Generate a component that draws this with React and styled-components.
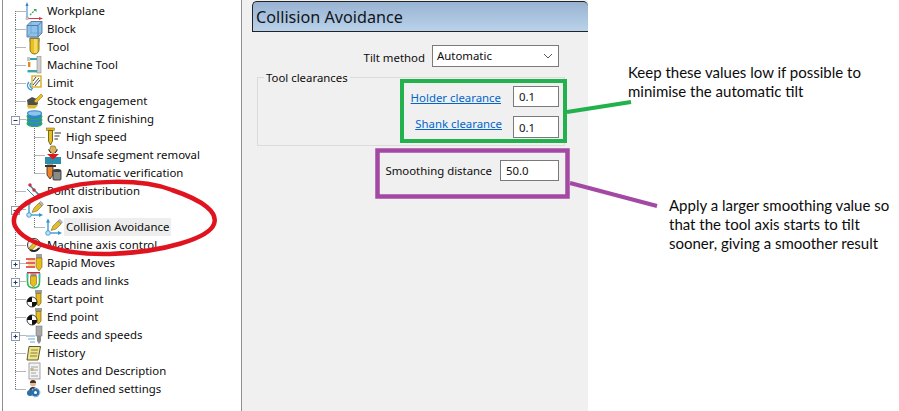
import React from "react";
import styled, { createGlobalStyle } from "styled-components";

const Global = createGlobalStyle`
  html, body { margin: 0; padding: 0; background: #fff; }
  #root { width: 899px; height: 411px; overflow: hidden; }
`;

const UI_FONT = `"Noto Sans", "Open Sans", "Liberation Sans", sans-serif`;

const Page = styled.div`
  position: relative;
  display: flex;
  width: 899px;
  height: 411px;
  background: #fff;
  overflow: hidden;
  font-family: ${UI_FONT};
  font-size: 11.4px;
  color: #0c0c0c;
`;

const TreePanel = styled.div`
  box-sizing: border-box;
  width: 239px;
  height: 411px;
  margin-left: 2px;
  border-left: 1px solid #8f8f8f;
  padding-top: 2px;
  display: flex;
  flex-direction: column;
  overflow: hidden;
`;

const Row = styled.div`
  display: flex;
  align-items: center;
  height: 18px;
  flex: none;
`;

const RowIcon = styled.svg`
  width: 19px;
  height: 18px;
  flex: none;
  overflow: visible;
`;

const Connector = styled.svg`
  width: ${(p) => (p.$level === 2 ? 42 : 23)}px;
  height: 18px;
  flex: none;
`;

const RowLabel = styled.span`
  padding: 0 2px;
  height: 18px;
  line-height: 17px;
  white-space: nowrap;
  background: ${(p) => (p.$selected ? "#eeeeee" : "transparent")};
`;

const Panel = styled.div`
  box-sizing: border-box;
  width: 347px;
  height: 411px;
  border-left: 1px solid #8f8f8f;
  background: #f0f0f0;
  padding: 1px 0 0 10px;
  display: flex;
  flex-direction: column;
`;

const TitleBar = styled.div`
  box-sizing: border-box;
  height: 31px;
  border: 1px solid #222;
  border-right: 0;
  border-radius: 5px 5px 0 0;
  background: linear-gradient(#98b3d2, #bad2ea);
  padding-left: 3px;
  font-size: 16.2px;
  line-height: 31px;
  color: #10151c;
  white-space: nowrap;
`;

const FormRow = styled.div`
  display: flex;
  justify-content: flex-end;
  align-items: center;
  gap: ${(p) => p.$gap || 8}px;
  padding-right: 29px;
  margin-top: ${(p) => p.$top || 0}px;
`;

const FieldLabel = styled.span`
  white-space: nowrap;
  transform: translateY(${(p) => p.$shift || 0}px);
`;

const LinkLabel = styled.a`
  color: #0066cc;
  text-decoration: underline;
  white-space: nowrap;
  cursor: pointer;
  transform: translateY(${(p) => p.$shift || 0}px);
`;

const SelectBox = styled.div`
  box-sizing: border-box;
  width: 127px;
  height: 22px;
  border: 1px solid #7a7a7a;
  background: #fff;
  padding: 0 4px;
  display: flex;
  align-items: center;
  justify-content: space-between;
  line-height: 18px;
`;

const ValueInput = styled.input`
  box-sizing: border-box;
  width: ${(p) => p.$w || 46}px;
  height: ${(p) => p.$h || 21}px;
  border: 1px solid #7a7a7a;
  border-radius: 0;
  background: #fff;
  padding: 0 0 0 5px;
  margin: 0;
  font: inherit;
  color: #111;
  outline: none;
`;

const Clearances = styled.fieldset`
  box-sizing: border-box;
  height: 76px;
  margin: 3px 23px 0 5px;
  padding: 0 5px 0 0;
  border: 1px solid #dcdcdc;
  min-width: 0;
  display: flex;
  flex-direction: column;
  gap: 9px;
`;

const Legend = styled.legend`
  margin-left: 6px;
  padding: 0 2px;
  height: 15px;
  line-height: 15px;
`;

const ClearanceRow = styled.div`
  display: flex;
  justify-content: flex-end;
  align-items: center;
  gap: ${(p) => p.$gap}px;
  padding-top: ${(p) => p.$pad || 0}px;
`;

const Markup = styled.svg`
  position: absolute;
  left: 0;
  top: 0;
  pointer-events: none;
`;

const Note = styled.div`
  position: absolute;
  left: ${(p) => p.$x}px;
  top: ${(p) => p.$y}px;
  font-family: Lato, "Noto Sans", sans-serif;
  font-size: 15px;
  line-height: 19px;
  color: #0c0c0c;
  white-space: nowrap;
`;

const AxesIcon = () => (
  <g>
    <path d="M3 15V3" stroke="#2f93cc" strokeWidth="1.3" />
    <path d="M1 4.5L3 .5l2 4z" fill="#2f93cc" />
    <path d="M3 15H14" stroke="#2f93cc" strokeWidth="1.3" />
    <path d="M13 13l4 2-4 2z" fill="#2f93cc" />
    <circle cx="3" cy="15" r="2.3" fill="#bfe0f2" stroke="#2f93cc" strokeWidth=".8" />
    <path d="M6 12.5L8 8l5-5 3 3-5 5z" fill="#e4bd2d" stroke="#7d6a20" strokeWidth=".6" />
    <path d="M13 3l1.7-1.7 2.8 2.8L16 6z" fill="#b9b9b9" stroke="#777" strokeWidth=".5" />
  </g>
);

const Ball = () => (
  <g>
    <circle cx="6" cy="12" r="5" fill="#fff" stroke="#111" strokeWidth=".8" />
    <path d="M6 7a5 5 0 0 0-5 5h5zM6 12v5a5 5 0 0 0 5-5z" fill="#111" />
  </g>
);

const icons = {
  workplane: (
    <g fill="none">
      <path d="M1 16V2" stroke="#2f7fd0" strokeWidth="1" />
      <path d="M-.5 4L1 0l1.5 4z" fill="#2f7fd0" />
      <path d="M1 16.5H14" stroke="#e2333a" strokeWidth="1" />
      <path d="M13 15l4 1.5-4 1.5z" fill="#e2333a" />
      <path d="M4 13l5-5" stroke="#2fa84f" strokeWidth="1.2" strokeDasharray="2 1" />
      <path d="M7.5 7H10.5V10z" fill="#2fa84f" />
      <rect x="0" y="15" width="2.5" height="2.5" fill="#ccc" stroke="#888" strokeWidth=".4" />
    </g>
  ),
  block: (
    <g stroke="#3d6c92" strokeWidth=".8">
      <path d="M1 5.5L5 1.5H16V13L12 17H1z" fill="#8ec1ec" />
      <path d="M1 5.5H12V17M12 5.5L16 1.5" fill="none" />
      <path d="M5 1.5V13H16M5 13L1 17" fill="none" stroke="#6a97bc" strokeWidth=".6" />
    </g>
  ),
  tool: (
    <g>
      <rect x="3.5" y="0" width="10" height="4" fill="#a8a8a8" />
      <path d="M4 0h9v11.5a4.5 4.5 0 0 1-9 0z" fill="#e8c11f" stroke="#6a5a10" strokeWidth=".8" />
      <path d="M8 1h3v14H8z" fill="#f3d968" />
      <path d="M4.5 .5h8" stroke="#777" strokeWidth="1" />
    </g>
  ),
  machine: (
    <g>
      <rect x="11" y="0.5" width="4" height="16.5" fill="#cfcfcf" stroke="#8d8d8d" strokeWidth=".6" />
      <rect x="1.5" y="2" width="9.5" height="2" fill="#3aa5a8" />
      <rect x="1.5" y="14" width="9.5" height="2.4" fill="#3aa5a8" />
      <rect x="1" y="1" width="3" height="4" fill="#c7c7c7" />
      <rect x="2" y="6" width="2.4" height="5" fill="#e48a1f" />
    </g>
  ),
  limit: (
    <g fill="none">
      <rect x="6" y="2" width="9" height="11" fill="#fff" stroke="#d8ae1e" strokeWidth="1.4" />
      <path d="M7 11L13 4M9 12l5-6M7 7l3-4" stroke="#444" strokeWidth="1" />
      <path d="M3 8c-3 3-1 8 3 8M5 9c-2 2-1 5 2 6" stroke="#3d9ad1" strokeWidth="1.3" />
    </g>
  ),
  stock: (
    <g>
      <path d="M1 8l5-3 5 2 1 5-4 3H2z" fill="#4e4e4e" />
      <path d="M1 13h11l-3 3.5H2z" fill="#d9b82a" />
      <path d="M8 9l7-7 2 2-7 7z" fill="#e8c11f" stroke="#79651a" strokeWidth=".5" />
    </g>
  ),
  constz: (
    <g stroke="#2caa55" strokeWidth="1.1">
      <ellipse cx="8.5" cy="13.5" rx="7.5" ry="3" fill="#2f86cf" />
      <ellipse cx="8.5" cy="10" rx="7.5" ry="3" fill="#2f86cf" />
      <ellipse cx="8.5" cy="6.5" rx="7.5" ry="3" fill="#2f86cf" />
      <ellipse cx="8.5" cy="3.5" rx="7" ry="2.7" fill="#8cc4ea" stroke="#2f86cf" />
    </g>
  ),
  high: (
    <g>
      <rect x="1.5" y="0" width="8" height="2.4" fill="#e7c01e" stroke="#6a5a10" strokeWidth=".5" />
      <path d="M3.5 2.4h4V13L5.5 17 3.5 13z" fill="#e7c01e" stroke="#5a4a08" strokeWidth=".8" />
      <path d="M9.5 5H16M9.5 8H14.5M9.5 11H13" stroke="#333" strokeWidth="1.2" />
    </g>
  ),
  unsafe: (
    <g>
      <rect x="0" y="11" width="16" height="7" fill="#2c8eaa" />
      <path d="M6 0h4l2 5-4 3-4-3z" fill="#d7b35c" stroke="#6d5a24" strokeWidth=".6" />
      <path d="M2 8h12l-6 5.5z" fill="#e3151d" />
      <path d="M3.5 3.5L6 7M12.5 3.5L10 7" stroke="#222" strokeWidth="1" />
    </g>
  ),
  verify: (
    <g>
      <path d="M2 1h6v10l-3 4-3-4z" fill="#e9852b" stroke="#322" strokeWidth=".8" />
      <path d="M0 1h11v2H0z" fill="#333" />
      <rect x="8" y="6" width="8" height="10" rx="1" fill="#8a8a8a" stroke="#222" strokeWidth=".8" />
      <ellipse cx="12" cy="6.5" rx="4" ry="1.6" fill="#3e3e3e" />
    </g>
  ),
  points: (
    <g>
      <path d="M3 2.5L12 12" stroke="#2f8ea0" strokeWidth="1.6" />
      <circle cx="4" cy="3" r="1.7" fill="#d2303b" />
      <circle cx="8" cy="8" r="1.7" fill="#d2303b" />
      <circle cx="13" cy="13" r="1.7" fill="#d2303b" />
      <path d="M1 7L8 14" stroke="#2f8ea0" strokeWidth="1" />
    </g>
  ),
  axis: <AxesIcon />,
  machineAxis: (
    <g>
      <circle cx="8" cy="9" r="6.5" fill="#f4f1dc" stroke="#333" strokeWidth="1" />
      <path d="M3 12L10 4l3 2-7 8z" fill="#e6bd1e" stroke="#555" strokeWidth=".5" />
      <path d="M4 14a7 7 0 0 0 9-2" fill="none" stroke="#222" strokeWidth="1.6" />
    </g>
  ),
  rapid: (
    <g>
      <path d="M0 5H9M0 9H9M0 13H9" stroke="#e22a2a" strokeWidth="1.6" />
      <path d="M2 7H9M2 11H9" stroke="#e8c11f" strokeWidth="1.2" />
      <rect x="10" y="0" width="6" height="4" fill="#a0a0a0" />
      <path d="M10 4h6v9l-3 4-3-4z" fill="#e6bd1e" stroke="#7a6215" strokeWidth=".6" />
    </g>
  ),
  leads: (
    <g>
      <path d="M1 0.7H14" stroke="#e2202a" strokeWidth="1.4" />
      <path d="M1.5 1v9c0 5 3 6 6 6s6-1 6-6V1" fill="none" stroke="#34b456" strokeWidth="1.6" />
      <path d="M1.5 1v5M13.5 1v5" stroke="#35b4d4" strokeWidth="1.4" />
      <rect x="4.5" y="1" width="6" height="3" fill="#999" />
      <path d="M4.5 4h6v8l-3 3-3-3z" fill="#e6bd1e" stroke="#7a6215" strokeWidth=".6" />
    </g>
  ),
  start: (
    <g>
      <rect x="9" y="0" width="7" height="3.4" fill="#9c9c9c" />
      <path d="M10 3.4h5V13l-2.5 3L10 13z" fill="#e6bd1e" stroke="#6f5a12" strokeWidth=".7" />
      <Ball />
    </g>
  ),
  feeds: (
    <g>
      <rect x="10" y="0" width="6" height="10" fill="#a9a9a9" stroke="#6b6b6b" strokeWidth=".5" />
      <path d="M11 10h4v5l-2 3-2-3z" fill="#8b8b8b" />
      <path d="M0 10H9M2 13H9M4 16H9" stroke="#69a4d4" strokeWidth="1" />
    </g>
  ),
  history: (
    <g>
      <path d="M3 2.5h11.5L12 16H1z" fill="#f0e58a" stroke="#4f4a22" strokeWidth=".9" />
      <path d="M5 6h7M4.5 9h7M4 12h7" stroke="#6c6530" strokeWidth=".8" />
    </g>
  ),
  notes: (
    <g>
      <rect x="3" y="1" width="11" height="16" fill="#f3f3f3" stroke="#8e8e8e" strokeWidth=".8" />
      <path d="M5 5H12M5 8H12M5 11H10M5 14H12" stroke="#a2a29a" strokeWidth="1" />
      <rect x="4.5" y="6" width="3" height="3" fill="#bdb58f" />
    </g>
  ),
  user: (
    <g>
      <circle cx="7" cy="3.5" r="3" fill="#e5b898" />
      <path d="M4 3a3 3 0 0 1 6 0z" fill="#4a3120" />
      <path d="M3 13c0-4 1-6 4-6s4 2 5 4z" fill="#353a44" />
      <circle cx="9.5" cy="12.5" r="4.2" fill="#2d6ea8" stroke="#8ab2d2" strokeWidth="1.3" strokeDasharray="2 1" />
      <circle cx="9.5" cy="12.5" r="1.5" fill="#fff" />
      <circle cx="4" cy="13" r="3" fill="#2d6ea8" />
    </g>
  ),
};

const items = [
  { label: "Workplane", icon: "workplane", first: true },
  { label: "Block", icon: "block" },
  { label: "Tool", icon: "tool" },
  { label: "Machine Tool", icon: "machine" },
  { label: "Limit", icon: "limit" },
  { label: "Stock engagement", icon: "stock" },
  { label: "Constant Z finishing", icon: "constz", box: "minus", parent: true },
  { label: "High speed", icon: "high", level: 2 },
  { label: "Unsafe segment removal", icon: "unsafe", level: 2 },
  { label: "Automatic verification", icon: "verify", level: 2, lastChild: true },
  { label: "Point distribution", icon: "points" },
  { label: "Tool axis", icon: "axis", box: "minus", parent: true },
  { label: "Collision Avoidance", icon: "axis", level: 2, lastChild: true, selected: true },
  { label: "Machine axis control", icon: "machineAxis" },
  { label: "Rapid Moves", icon: "rapid", box: "plus" },
  { label: "Leads and links", icon: "leads", box: "plus" },
  { label: "Start point", icon: "start" },
  { label: "End point", icon: "start" },
  { label: "Feeds and speeds", icon: "feeds", box: "plus" },
  { label: "History", icon: "history" },
  { label: "Notes and Description", icon: "notes" },
  { label: "User defined settings", icon: "user", last: true },
];

const Dots = ({ d }) => <path d={d} stroke="#6e6e6e" strokeWidth="1" strokeDasharray="1 1" fill="none" />;

const Lines = ({ item }) => {
  const level = item.level || 1;
  const trunkTop = item.first ? 9 : 0;
  const trunkBottom = item.last ? 9 : 18;
  return (
    <Connector $level={level} viewBox={`0 0 ${level === 2 ? 42 : 23} 18`}>
      <Dots d={`M12.5 ${trunkTop}V${trunkBottom}`} />
      {level === 1 && <Dots d="M12.5 9.5H23" />}
      {item.parent && <Dots d="M31.5 14V18" />}
      {level === 2 && (
        <>
          <Dots d={`M31.5 0V${item.lastChild ? 9.5 : 18}`} />
          <Dots d="M31.5 9.5H42" />
        </>
      )}
      {item.box && (
        <g>
          <rect x="8.5" y="6.5" width="8" height="8" fill="#fff" stroke="#8d99a6" />
          <path d="M10.5 10.5h4" stroke="#1f3a6a" />
          {item.box === "plus" && <path d="M12.5 8.5v4" stroke="#1f3a6a" />}
        </g>
      )}
    </Connector>
  );
};

export default function App() {
  return (
    <Page>
      <Global />
      <TreePanel>
        {items.map((item) => (
          <Row key={item.label}>
            <Lines item={item} />
            <RowIcon viewBox="0 0 19 18">{icons[item.icon]}</RowIcon>
            <RowLabel $selected={item.selected}>{item.label}</RowLabel>
          </Row>
        ))}
      </TreePanel>
      <Panel>
        <TitleBar>Collision Avoidance</TitleBar>
        <FormRow $top={13} $gap={7}>
          <FieldLabel $shift={1}>Tilt method</FieldLabel>
          <SelectBox>
            Automatic
            <svg width="12" height="12" viewBox="0 0 12 12">
              <path d="M2 4l4 4 4-4" fill="none" stroke="#555" strokeWidth="1" />
            </svg>
          </SelectBox>
        </FormRow>
        <Clearances>
          <Legend>Tool clearances</Legend>
          <ClearanceRow $gap={12} $pad={1}>
            <LinkLabel $shift={1}>Holder clearance</LinkLabel>
            <ValueInput readOnly value="0.1" />
          </ClearanceRow>
          <ClearanceRow $gap={11}>
            <LinkLabel $shift={-4}>Shank clearance</LinkLabel>
            <ValueInput $h={22} readOnly value="0.1" />
          </ClearanceRow>
        </Clearances>
        <FormRow $top={14} $gap={8}>
          <FieldLabel>Smoothing distance</FieldLabel>
          <ValueInput $w={59} readOnly value="50.0" />
        </FormRow>
      </Panel>
      <Markup width="899" height="411" viewBox="0 0 899 411">
        <path
          d="M53 191C85 180 140 178 172 190C205 201 218 213 214 224C209 238 165 252 110 254C65 255 24 244 15 226C9 212 27 200 53 191"
          fill="none"
          stroke="#e0141f"
          strokeWidth="4.5"
        />
        <rect x="402" y="81" width="163" height="60" fill="none" stroke="#22b14c" strokeWidth="4" />
        <path d="M567 112L631 102" stroke="#22b14c" strokeWidth="4" />
        <rect x="377.5" y="150.5" width="190" height="46" fill="none" stroke="#a349a4" strokeWidth="4.5" />
        <path d="M570 183L657 206" stroke="#a349a4" strokeWidth="4" />
      </Markup>
      <Note $x={628} $y={63}>
        Keep these values low if possible to
        <br />
        minimise the automatic tilt
      </Note>
      <Note $x={669} $y={196}>
        Apply a larger smoothing value so
        <br />
        that the tool axis starts to tilt
        <br />
        sooner, giving a smoother result
      </Note>
    </Page>
  );
}
